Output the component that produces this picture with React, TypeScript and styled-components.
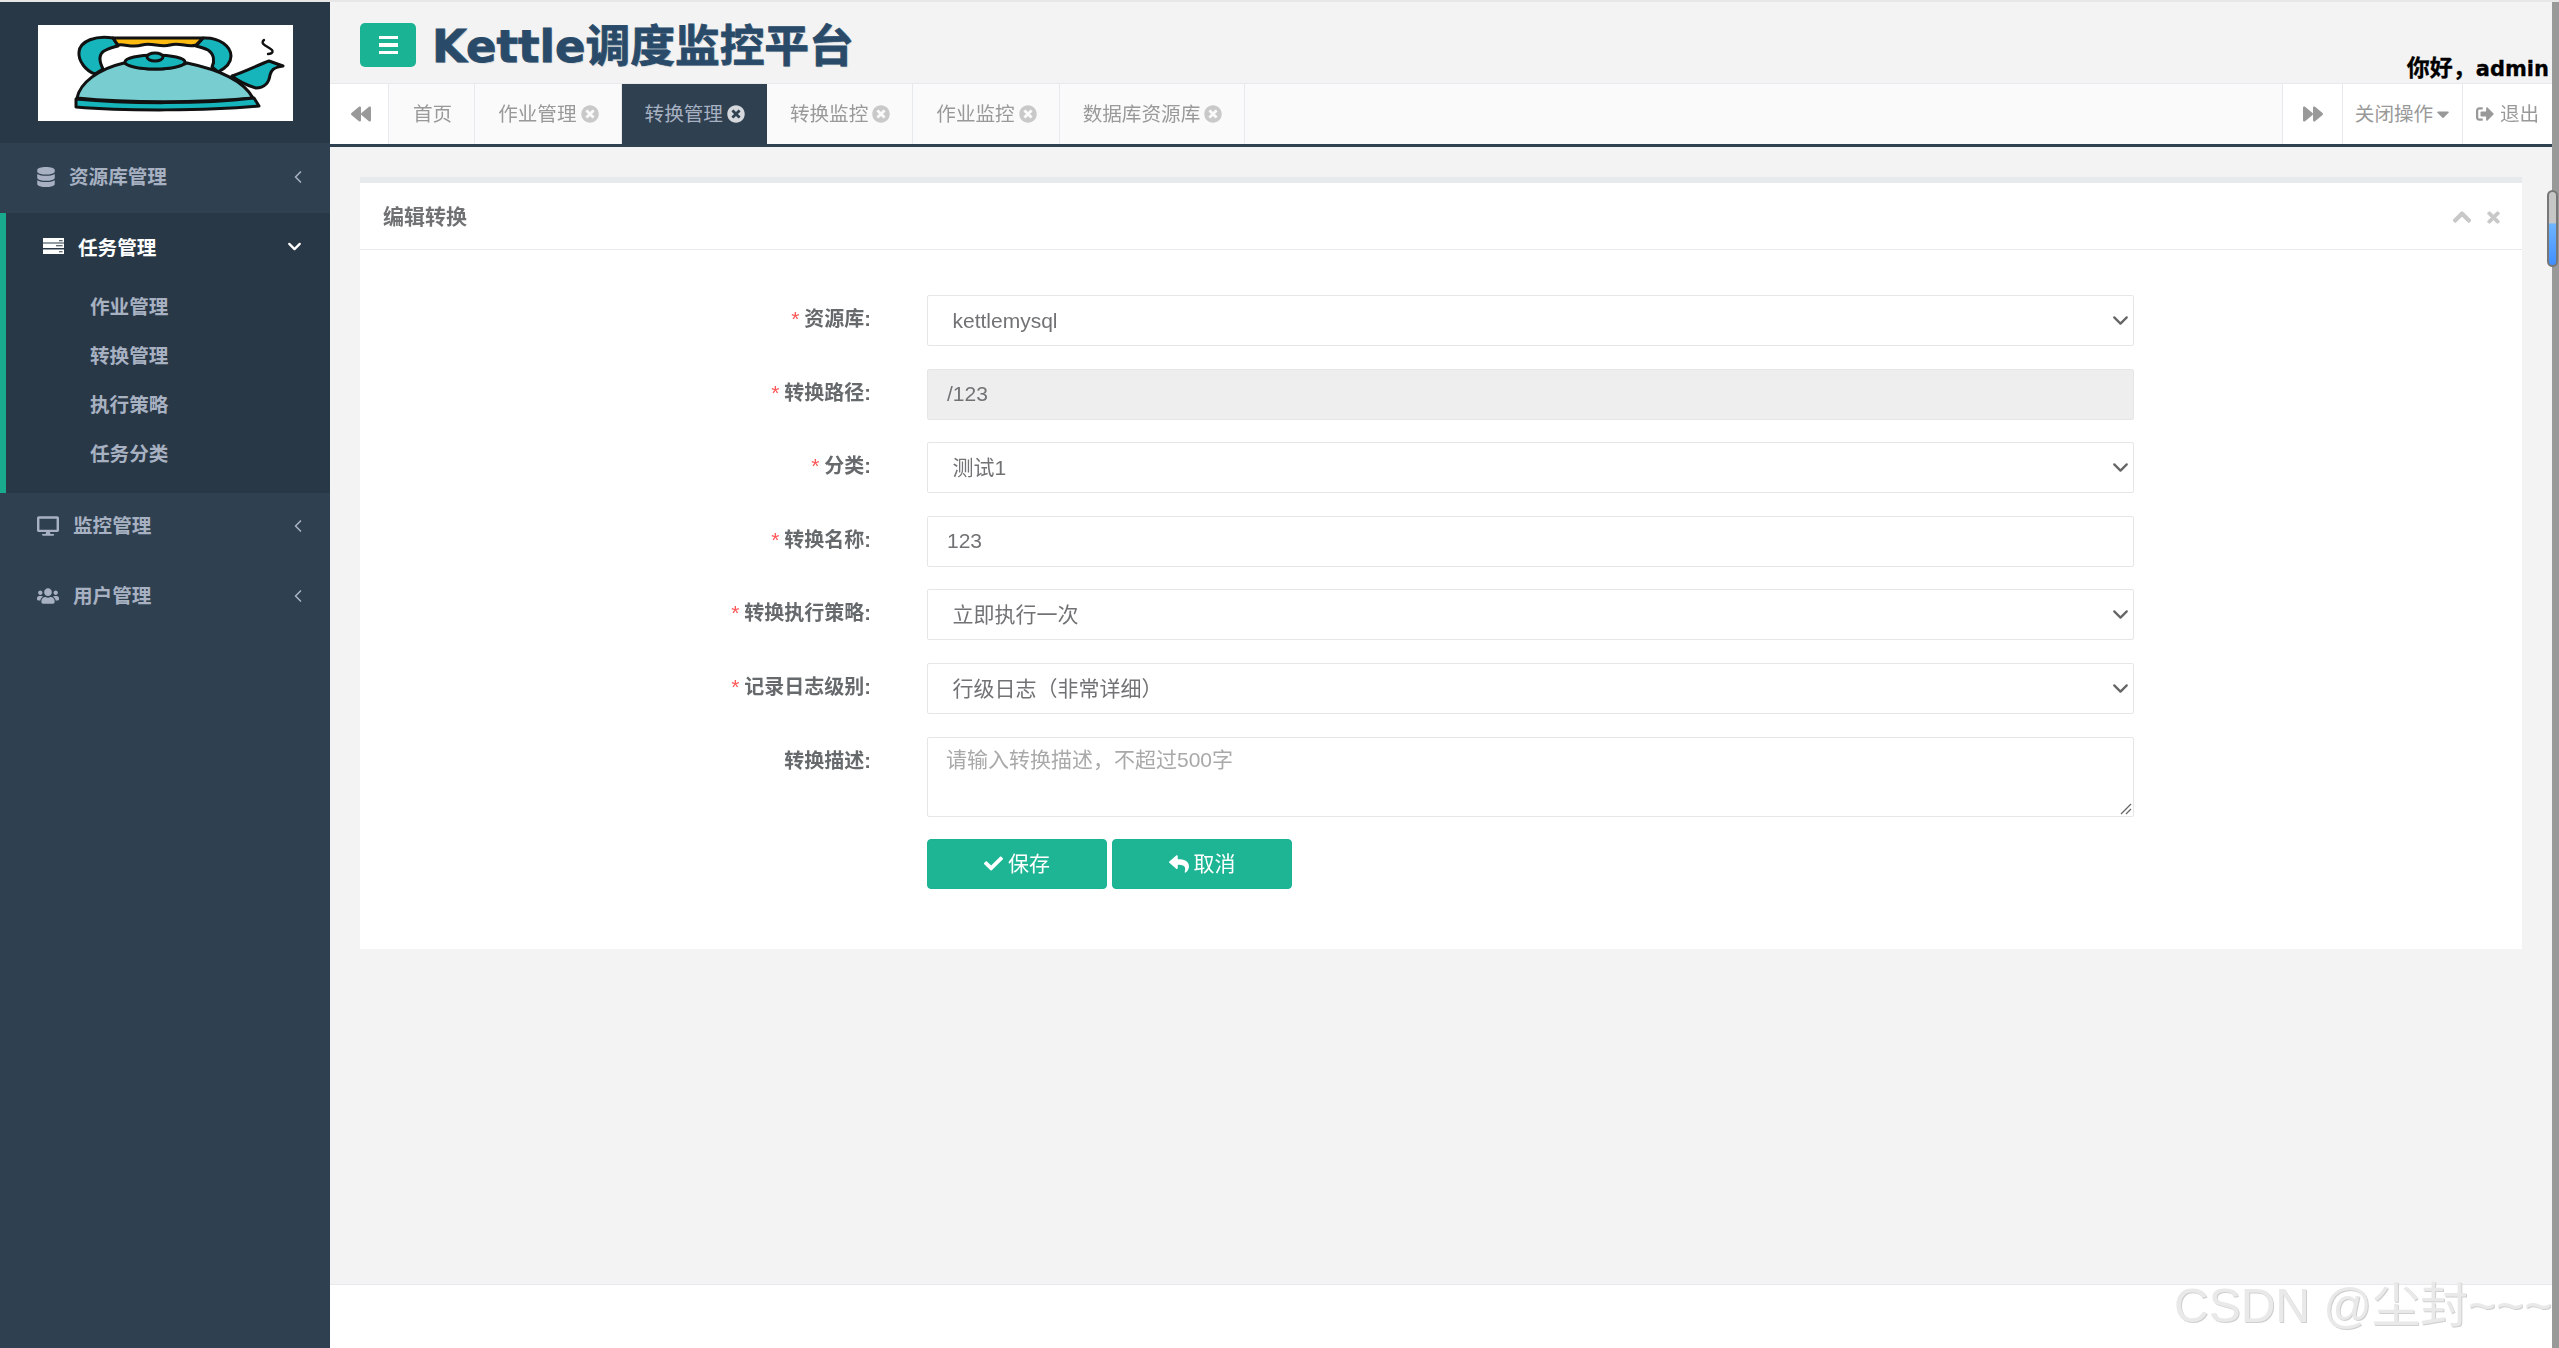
import React from "react";
import styled, { createGlobalStyle } from "styled-components";
import {
  FaDatabase, FaDesktop, FaUsers, FaBackward, FaForward, FaTimesCircle,
  FaCaretDown, FaSignOutAlt, FaChevronUp, FaTimes, FaCheck, FaReply,
} from "react-icons/fa";
import { ChevronLeft, ChevronDown } from "lucide-react";

const SANS = `"Liberation Sans", "Noto Sans CJK SC", sans-serif`;

const Global = createGlobalStyle`
  html, body { margin: 0; padding: 0; height: 100%; overflow: hidden; background: #fff; }
  body { font-family: ${SANS}; }
  #root { height: 100%; }
  * { box-sizing: border-box; }
`;

const Page = styled.div`
  display: flex;
  height: 1348px;
  border-top: 2px solid #e7e7e7;
  position: relative;
  filter: blur(0.35px);
`;

const Sidebar = styled.aside`
  width: 330px;
  flex: none;
  background: #2f4050;
  display: flex;
  flex-direction: column;
`;

const LogoHeader = styled.div`
  height: 141px;
  padding: 23px 0 0 38px;
  background: #293846;
`;

const LogoBox = styled.div`
  width: 255px;
  height: 96px;
  background: #fff;
  svg { display: block; }
`;

const NavRow = styled.div<{ $active?: boolean; $lift?: boolean }>`
  height: 70px;
  padding: 0 21px ${(p) => (p.$active ? 4 : p.$lift ? 5 : 2)}px 37px;
  display: flex;
  align-items: center;
  gap: 14px;
  font-size: 19.6px;
  font-weight: 700;
  color: ${(p) => (p.$active ? "#fff" : "#a7b1c2")};
`;

const NavText = styled.span<{ $active?: boolean }>`
  margin-bottom: ${(p) => (p.$active ? 0 : 3)}px;
`;

const DatabaseIcon = styled(FaDatabase)`
  margin: 0 -1px 0 -1px;
`;

const RowEnd = styled.span<{ $down?: boolean }>`
  margin-left: auto;
  margin-right: ${(p) => (p.$down ? 4 : 1.5)}px;
  display: flex;
`;

const ActiveGroup = styled.div`
  height: 280px;
  background: #293846;
  border-left: 6px solid #19aa8d;
`;

const SubItem = styled.div`
  height: 49px;
  line-height: 49px;
  padding-left: 84px;
  font-size: 19.6px;
  font-weight: 700;
  color: #a7b1c2;
`;

const Main = styled.main`
  flex: 1;
  min-width: 0;
  display: flex;
  flex-direction: column;
  position: relative;
`;

const TopBar = styled.header`
  height: 82px;
  flex: none;
  background: #f3f3f4;
  border-bottom: 1px solid #e7eaec;
  padding-left: 30px;
  display: flex;
  align-items: flex-start;
`;

const MenuButton = styled.button`
  width: 56px;
  height: 44px;
  margin-top: 21px;
  border: none;
  border-radius: 5px;
  background: #1ab394;
  display: flex;
  flex-direction: column;
  align-items: center;
  justify-content: center;
  gap: 4px;
  padding: 0;
`;

const MenuBar = styled.span`
  display: block;
  width: 19px;
  height: 3.4px;
  background: #fff;
`;

const Brand = styled.h1`
  margin: 11px 0 0 16px;
  font-family: "DejaVu Sans", sans-serif;
  font-size: 45px;
  font-weight: 700;
  line-height: 60px;
  color: #294b69;
  -webkit-text-stroke: 0.8px #294b69;
  text-shadow: 1px 1px 1px #c4c8cc;
`;

const BrandCjk = styled.span`
  font-family: "Noto Sans CJK SC", sans-serif;
  font-size: 44.7px;
`;

const Greeting = styled.div`
  margin: 50px 3px 0 auto;
  font-family: "DejaVu Sans", "Noto Sans CJK SC", sans-serif;
  font-weight: 700;
  font-size: 21px;
  line-height: 28px;
  color: #000;
  -webkit-text-stroke: 0.3px #000;
`;

const GreetingCjk = styled.span`
  font-family: "Noto Sans CJK SC", sans-serif;
  font-size: 23px;
`;

const TabBar = styled.nav`
  height: 63px;
  flex: none;
  background: #fafafa;
  border-bottom: 3px solid #2f4050;
  display: flex;
  align-items: stretch;
  font-size: 19.6px;
  color: #999;
`;

const EdgeButton = styled.div<{ $w: number; $side?: "left" | "right"; $gap?: number }>`
  width: ${(p) => p.$w}px;
  flex: none;
  background: #fff;
  display: flex;
  align-items: center;
  justify-content: center;
  gap: ${(p) => p.$gap ?? 0}px;
  ${(p) => (p.$side === "left" ? "border-left" : "border-right")}: 1px solid #e7eaec;
`;

const BackIcon = styled(FaBackward)`
  margin-left: 3px;
`;

const MenuCaret = styled(FaCaretDown)`
  margin-right: -3px;
`;

const Tab = styled.div<{ $active?: boolean; $plain?: boolean }>`
  flex: none;
  display: flex;
  align-items: center;
  gap: 4px;
  padding: 0 22px 0 ${(p) => (p.$plain ? 24 : 23)}px;
  background: ${(p) => (p.$active ? "#2f4050" : "transparent")};
  color: ${(p) => (p.$active ? "#a7b1c2" : "#999")};
  border-right: ${(p) => (p.$active ? "none" : "1px solid #e7eaec")};
`;

const TabText = styled.span`
  margin-bottom: 3px;
`;

const TabClose = styled(FaTimesCircle)<{ $active?: boolean }>`
  width: 18px;
  height: 18px;
  color: ${(p) => (p.$active ? "#d5d8dc" : "#c9c9c9")};
`;

const Spacer = styled.div`
  flex: 1;
`;

const Content = styled.section`
  flex: 1;
  background: #f3f3f4;
  padding: 30px 30px 0;
`;

const Card = styled.div`
  background: #fff;
  border-top: 6px solid #e7eaec;
  height: 772px;
`;

const CardTitle = styled.div`
  height: 67px;
  padding: 0 20px 3px 23px;
  border-bottom: 1px solid #e7eaec;
  display: flex;
  align-items: center;
  font-size: 21px;
  font-weight: 700;
  color: #6f7173;
`;

const CardTools = styled.div`
  margin: 5px 0 0 auto;
  display: flex;
  align-items: center;
  gap: 13px;
  color: #c8c8c8;
  svg { stroke: currentColor; stroke-width: 30; }
`;

const Form = styled.form`
  padding-top: 45px;
  display: flex;
  flex-direction: column;
  gap: 22.6px;
`;

const FormRow = styled.div`
  display: flex;
  gap: 56px;
`;

const Label = styled.label`
  width: 511px;
  flex: none;
  text-align: right;
  font-size: 20px;
  line-height: 48px;
  font-weight: 700;
  color: #676a6c;
`;

const Required = styled.span`
  color: #f55;
  font-weight: 400;
  font-size: 21px;
  margin-right: 5px;
`;

const SelectWrap = styled.div`
  position: relative;
  width: 1207px;
  height: 51px;
  svg { position: absolute; right: 1px; top: 13px; pointer-events: none; color: #666; }
`;

const Select = styled.select`
  appearance: none;
  width: 100%;
  height: 100%;
  background: #fff;
  border: 1.6px solid #e5e6e7;
  border-radius: 2px;
  padding: 0 40px 0 24.5px;
  font: 21px ${SANS};
  color: #707274;
  outline: none;
`;

const TextInput = styled.input`
  display: block;
  width: 1207px;
  height: 51px;
  background: ${(p) => (p.readOnly ? "#eeeeee" : "#fff")};
  border: 1.6px solid #e5e6e7;
  border-radius: 2px;
  padding: 0 19px;
  font: 21px ${SANS};
  color: #707274;
  outline: none;
`;

const TextAreaWrap = styled.div`
  position: relative;
  width: 1207px;
  height: 80px;
  svg { position: absolute; right: 2px; bottom: 2px; pointer-events: none; }
`;

const TextArea = styled.textarea`
  display: block;
  width: 100%;
  height: 100%;
  resize: none;
  background: #fff;
  border: 1.6px solid #e5e6e7;
  border-radius: 2px;
  padding: 9.5px 18px;
  font: 21px/26px ${SANS};
  color: #676a6c;
  outline: none;
  &::placeholder { color: #a9a9a9; opacity: 1; }
`;

const Actions = styled.div`
  margin-left: 567px;
  display: flex;
  gap: 5px;
`;

const ActionButton = styled.button`
  width: 180px;
  height: 50px;
  border: 1.6px solid #1ab394;
  border-radius: 4px;
  background: #1eb595;
  color: #fff;
  font: 21px ${SANS};
  display: flex;
  align-items: center;
  justify-content: center;
  gap: 5px;
  padding: 0 0 1px;
`;

const ActionText = styled.span`
  margin-bottom: 3px;
`;

const Footer = styled.footer`
  height: 64px;
  flex: none;
  background: #fff;
  border-top: 1px solid #e7eaec;
`;

const Watermark = styled.div`
  position: absolute;
  left: 1844px;
  right: 0;
  bottom: 13px;
  overflow: hidden;
  white-space: nowrap;
  font: 48px/58px ${SANS};
  color: #e9e9e9;
  text-shadow: 1px 1px 0 #cfcfcf;
  pointer-events: none;
`;

const ScrollTrack = styled.div`
  width: 7px;
  flex: none;
  background: #999;
  position: relative;
`;

const ScrollThumb = styled.div`
  position: absolute;
  top: 188px;
  left: -5px;
  width: 11px;
  height: 77px;
  border: 2.5px solid #777;
  border-radius: 6px;
  background: linear-gradient(to bottom, #c6c6c6 0 42%, #6fb4ff 44%, #3f8fff 100%);
`;

const KettleLogo = () => (
  <svg width="255" height="96" viewBox="0 0 255 96">
    <g stroke="#111" strokeWidth="3" strokeLinejoin="round" strokeLinecap="round">
      <path d="M75 13 C58 10 42 16 41 27 C40 36 48 46 57 49 L65 44 C62 38 60 30 66 26 C70 24 74 22 80 21 Z" fill="#16b4bb" />
      <path d="M165 13 C182 12 193 22 193 31 C193 38 188 43 180 47 L174 42 C177 36 176 29 170 25 C166 23 162 22 158 21 Z" fill="#16b4bb" />
      <path d="M75 13 L165 13 L158 20 C150 23 142 17 132 20 C122 23 114 17 104 20 C94 23 88 19 80 20 Z" fill="#fdbb12" />
      <path d="M194 51 C206 47 220 40 231 36 L245 41 C236 42 233 45 232 50 C231 58 226 63 218 63 C208 60 200 56 194 51 Z" fill="#16b4bb" />
      <path d="M39 73 C42 58 60 44 86 38 C105 46 130 46 149 38 C178 44 205 55 215 73 C160 78 90 78 39 73 Z" fill="#77cdd0" />
      <ellipse cx="117" cy="37" rx="30" ry="7" fill="#16b4bb" />
      <ellipse cx="117" cy="32" rx="8" ry="4" fill="#16b4bb" />
      <path d="M38 74 C90 79 165 79 216 73 L221 81 C170 86 85 86 38 82 Z" fill="#16b4bb" />
    </g>
    <path d="M226 15 C221 19 231 22 234 25 C236 28 232 29 230 29" fill="none" stroke="#111" strokeWidth="2.4" strokeLinecap="round" />
  </svg>
);

const TasksIcon = () => (
  <svg width="21" height="16" viewBox="0 0 21 16" fill="#fff">
    <path d="M0 0h21v4.4h-5v-1.2h3.6v-1h-3.6v2.2H0z" />
    <path d="M0 5.6h21v4.4H0zM13 7.2v1h6.6v-1z" fillRule="evenodd" />
    <path d="M0 11.4h21V16H0zM16 13.2v1h3.6v-1z" fillRule="evenodd" />
  </svg>
);

const SideChevron = () => (
  <RowEnd><ChevronLeft size={20} strokeWidth={2} /></RowEnd>
);

const Nav = () => (
  <Sidebar>
    <LogoHeader>
      <LogoBox><KettleLogo /></LogoBox>
    </LogoHeader>
    <NavRow>
      <DatabaseIcon size={20} />
      <NavText>资源库管理</NavText>
      <SideChevron />
    </NavRow>
    <ActiveGroup>
      <NavRow $active>
        <TasksIcon />
        <NavText $active>任务管理</NavText>
        <RowEnd $down><ChevronDown size={21} strokeWidth={2.6} /></RowEnd>
      </NavRow>
      {["作业管理", "转换管理", "执行策略", "任务分类"].map((t) => (
        <SubItem key={t}>{t}</SubItem>
      ))}
    </ActiveGroup>
    <NavRow $lift>
      <FaDesktop size={22} />
      <NavText>监控管理</NavText>
      <SideChevron />
    </NavRow>
    <NavRow $lift>
      <FaUsers size={22} />
      <NavText>用户管理</NavText>
      <SideChevron />
    </NavRow>
  </Sidebar>
);

const tabs = [
  { name: "作业管理" },
  { name: "转换管理", active: true },
  { name: "转换监控" },
  { name: "作业监控" },
  { name: "数据库资源库" },
];

const Field = ({ label, required, children }: { label: string; required?: boolean; children: React.ReactNode }) => (
  <FormRow>
    <Label>
      {required && <Required>*</Required>}
      {label}:
    </Label>
    {children}
  </FormRow>
);

const SelectField = ({ value }: { value: string }) => (
  <SelectWrap>
    <Select defaultValue={value}>
      <option>{value}</option>
    </Select>
    <ChevronDown size={25} strokeWidth={2.2} />
  </SelectWrap>
);

export default function App() {
  return (
    <>
      <Global />
      <Page>
        <Nav />
        <Main>
          <TopBar>
            <MenuButton type="button" aria-label="menu">
              <MenuBar />
              <MenuBar />
              <MenuBar />
            </MenuButton>
            <Brand>Kettle<BrandCjk>调度监控平台</BrandCjk></Brand>
            <Greeting><GreetingCjk>你好，</GreetingCjk>admin</Greeting>
          </TopBar>
          <TabBar>
            <EdgeButton $w={59}><BackIcon size={20} /></EdgeButton>
            <Tab $plain><TabText>首页</TabText></Tab>
            {tabs.map((t) => (
              <Tab key={t.name} $active={t.active}>
                <TabText>{t.name}</TabText>
                <TabClose $active={t.active} />
              </Tab>
            ))}
            <Spacer />
            <EdgeButton $w={60} $side="left"><FaForward size={20} /></EdgeButton>
            <EdgeButton $w={120} $side="left"><TabText>关闭操作</TabText><MenuCaret size={20} /></EdgeButton>
            <EdgeButton $w={90} $side="left" $gap={6}><FaSignOutAlt size={18} /><TabText>退出</TabText></EdgeButton>
          </TabBar>
          <Content>
            <Card>
              <CardTitle>
                编辑转换
                <CardTools>
                  <FaChevronUp size={20} />
                  <FaTimes size={17} />
                </CardTools>
              </CardTitle>
              <Form>
                <Field label="资源库" required><SelectField value="kettlemysql" /></Field>
                <Field label="转换路径" required><TextInput readOnly defaultValue="/123" /></Field>
                <Field label="分类" required><SelectField value="测试1" /></Field>
                <Field label="转换名称" required><TextInput defaultValue="123" /></Field>
                <Field label="转换执行策略" required><SelectField value="立即执行一次" /></Field>
                <Field label="记录日志级别" required><SelectField value="行级日志（非常详细）" /></Field>
                <Field label="转换描述">
                  <TextAreaWrap>
                    <TextArea placeholder="请输入转换描述，不超过500字" />
                    <svg width="12" height="12" viewBox="0 0 12 12" stroke="#666" strokeWidth="1.3">
                      <path d="M11 1 1 11M11 6 6 11" />
                    </svg>
                  </TextAreaWrap>
                </Field>
                <Actions>
                  <ActionButton type="button"><FaCheck size={19} /><ActionText>保存</ActionText></ActionButton>
                  <ActionButton type="button"><FaReply size={20} /><ActionText>取消</ActionText></ActionButton>
                </Actions>
              </Form>
            </Card>
          </Content>
          <Footer />
          <Watermark>CSDN @尘封~~~</Watermark>
        </Main>
        <ScrollTrack><ScrollThumb /></ScrollTrack>
      </Page>
    </>
  );
}
